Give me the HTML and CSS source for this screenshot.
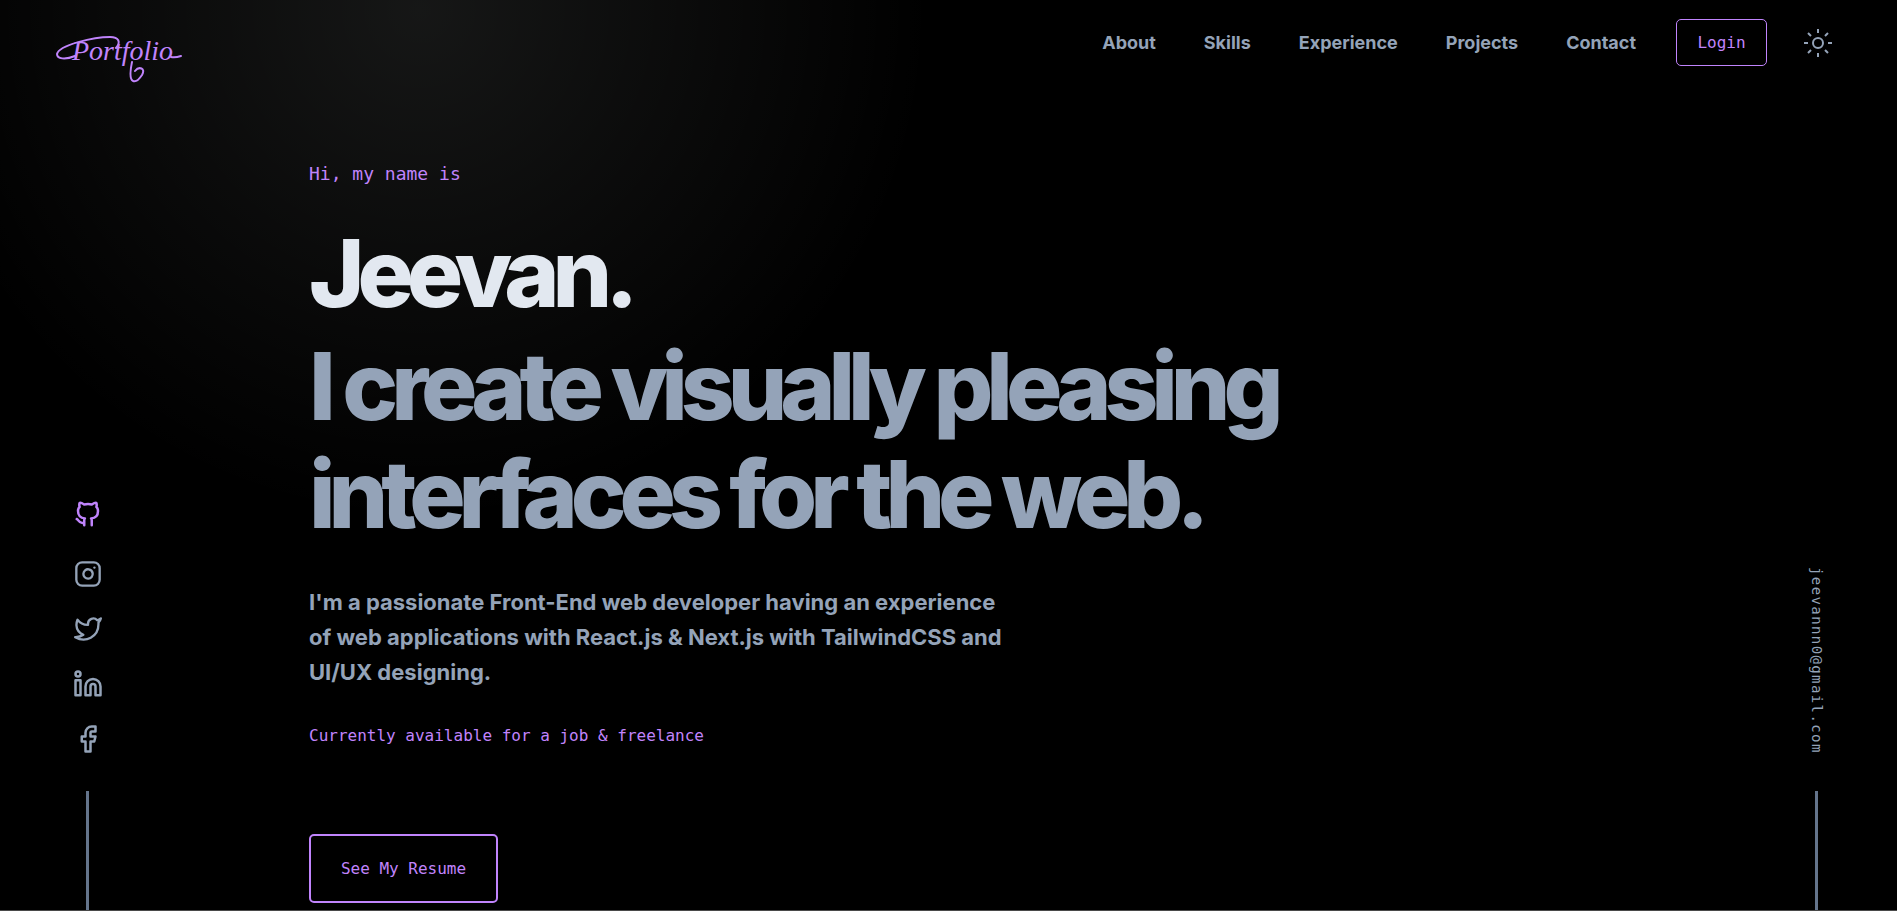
FILE: index.html
```html
<!DOCTYPE html>
<html lang="en">
<head>
  <meta charset="UTF-8">
  <meta name="viewport" content="width=device-width, initial-scale=1.0">
  <title>Jeevan | Portfolio</title>
  <link rel="stylesheet" href="styles.css">
</head>
<body>
  <div class="page">
    <!-- Navbar -->
    <header class="navbar">
      <a href="#" class="logo">
        <span>Portfolio</span>
        <svg class="flourish" viewBox="0 0 126 48" aria-hidden="true">
          <path d="M19 20C9 24 1 23 1 18C3 9 38 1 54 1C63 1 65 6 60 12"/>
          <path d="M76 26C71 50 80 48 86 39C90 32 83 30 79 35"/>
          <path d="M115 21C119 22 122 21 125 20"/>
        </svg>
      </a>
      <div class="nav-right">
        <nav class="nav-links">
          <a href="#about">About</a>
          <a href="#skills">Skills</a>
          <a href="#experience">Experience</a>
          <a href="#projects">Projects</a>
          <a href="#contact">Contact</a>
        </nav>
        <button type="button" class="login-btn">Login</button>
        <button type="button" class="theme-btn" aria-label="Toggle theme">
          <svg viewBox="0 0 30 30">
            <circle cx="15" cy="15" r="5"/>
            <path d="M15 1v4M15 25v4M1 15h4M25 15h4M5 5l3 3M22 22l3 3M5 25l3-3M22 8l3-3"/>
          </svg>
        </button>
      </div>
    </header>

    <div class="content">
      <!-- Social links -->
      <aside class="side">
        <ul class="social">
          <li>
            <a href="#" class="active" aria-label="GitHub">
              <svg viewBox="0 0 24 24"><path d="M9 19c-4.3 1.4-4.3-2.5-6-3m12 5v-3.5c0-1 .1-1.4-.5-2c2.8-.3 5.5-1.4 5.5-6a4.6 4.6 0 0 0-1.3-3.2a4.2 4.2 0 0 0-.1-3.2s-1.1-.3-3.5 1.3a12.3 12.3 0 0 0-6.2 0c-2.4-1.6-3.5-1.3-3.5-1.3a4.2 4.2 0 0 0-.1 3.2a4.6 4.6 0 0 0-1.3 3.2c0 4.6 2.7 5.7 5.5 6c-.6.6-.6 1.2-.5 2v3.5"/></svg>
            </a>
          </li>
          <li>
            <a href="#" aria-label="Instagram">
              <svg class="small" viewBox="0 0 24 24"><rect x="2" y="2" width="20" height="20" rx="5"/><path d="M16 11.37A4 4 0 1 1 12.63 8 4 4 0 0 1 16 11.37z"/><path d="M17.5 6.5h.01"/></svg>
            </a>
          </li>
          <li>
            <a href="#" aria-label="Twitter">
              <svg class="small" viewBox="0 0 24 24"><path d="M23 3a10.9 10.9 0 0 1-3.14 1.53 4.48 4.48 0 0 0-7.86 3v1A10.66 10.66 0 0 1 3 4s-4 9 5 13a11.64 11.64 0 0 1-7 2c9 5 20 0 20-11.5a4.5 4.5 0 0 0-.08-.83A7.72 7.72 0 0 0 23 3z"/></svg>
            </a>
          </li>
          <li>
            <a href="#" aria-label="LinkedIn">
              <svg viewBox="0 0 24 24"><path d="M16 8a6 6 0 0 1 6 6v7h-4v-7a2 2 0 0 0-4 0v7h-4v-7a6 6 0 0 1 6-6z"/><rect x="2" y="9" width="4" height="12"/><circle cx="4" cy="4" r="2"/></svg>
            </a>
          </li>
          <li>
            <a href="#" aria-label="Facebook">
              <svg viewBox="0 0 24 24"><path d="M18 2h-3a5 5 0 0 0-5 5v3H7v4h3v8h4v-8h3l1-4h-4V7a1 1 0 0 1 1-1h3z"/></svg>
            </a>
          </li>
        </ul>
        <div class="line"></div>
      </aside>

      <!-- Hero -->
      <main class="hero">
        <p class="intro">Hi, my name is</p>
        <h1>Jeevan.</h1>
        <h2>I create visually pleasing interfaces for the web.</h2>
        <p class="about">I'm a passionate Front-End web developer having an experience of web applications with React.js &amp; Next.js with TailwindCSS and UI/UX designing.</p>
        <p class="status">Currently available for a job &amp; freelance</p>
        <button type="button" class="resume-btn">See My Resume</button>
      </main>

      <!-- Email -->
      <aside class="side">
        <a href="mailto:jeevannn0@gmail.com" class="email">jeevannn0@gmail.com</a>
        <div class="line"></div>
      </aside>
    </div>
  </div>
</body>
</html>
```
FILE: styles.css
```css
* { margin: 0; padding: 0; box-sizing: border-box; }

:root {
  --purple: #c084fc;
  --slate: #94a3b8;
  --slate-dark: #64748b;
  --light: #e2e8f0;
  --mono: "DejaVu Sans Mono", monospace;
}

body {
  background: #000;
  color: var(--slate);
  font-family: Inter, sans-serif;
}

a { color: inherit; text-decoration: none; }
button { background: none; font-family: inherit; cursor: pointer; }

.page {
  min-height: 100vh;
  display: flex;
  flex-direction: column;
  border-bottom: 1px solid #4a4a4a;
  background: radial-gradient(640px at 420px 10px, rgba(245, 255, 250, 0.09), transparent 80%);
}

/* Navbar */
.navbar {
  display: flex;
  justify-content: space-between;
  align-items: flex-start;
  padding: 19px 64px 0 56px;
}

.logo {
  position: relative;
  margin-top: 17px;
  padding-left: 16px;
  color: var(--purple);
  font: italic 28px/30px "Liberation Serif", serif;
}

/* pen strokes over the wordmark */
.flourish {
  position: absolute;
  top: 0;
  left: 0;
  width: 126px;
  height: 48px;
  fill: none;
  stroke: var(--purple);
  stroke-width: 2;
  stroke-linecap: round;
}

.nav-right {
  display: flex;
  align-items: center;
}

.nav-links {
  display: flex;
  gap: 48px;
  margin-right: 40px;
  font-size: 18px;
  font-weight: 700;
}

.login-btn {
  width: 91px;
  height: 47px;
  margin-right: 36px;
  border: 1px solid var(--purple);
  border-radius: 5px;
  color: var(--purple);
  font-family: var(--mono);
  font-size: 16px;
}

.theme-btn {
  width: 30px;
  height: 30px;
  border: none;
}
.theme-btn svg {
  display: block;
  fill: none;
  stroke: var(--slate);
  stroke-width: 2;
}

/* Three columns: social, hero, email */
.content {
  flex: 1;
  display: grid;
  grid-template-columns: 175px 1fr 161px;
}

.side {
  display: flex;
  flex-direction: column;
  align-items: center;
  justify-content: flex-end;
}

.line {
  width: 3px;
  height: 119px;
  margin-top: 37px;
  background: var(--slate-dark);
}

.social {
  list-style: none;
  display: flex;
  flex-direction: column;
  gap: 25px;
}
.social a {
  display: flex;
  align-items: center;
  justify-content: center;
  width: 30px;
  height: 30px;
}
.social svg {
  width: 30px;
  height: 30px;
  fill: none;
  stroke: currentColor;
  stroke-width: 2;
  stroke-linecap: round;
  stroke-linejoin: round;
}
.social .small { width: 28px; height: 28px; }
.social .active {
  color: var(--purple);
  transform: translateY(-5px);
}

.email {
  writing-mode: vertical-rl;
  font-family: var(--mono);
  font-size: 14px;
  letter-spacing: 0.1em;
}

/* Hero */
.hero {
  padding: 96px 0 6px 134px;
}

.intro {
  color: var(--purple);
  font-family: var(--mono);
  font-size: 18px;
  line-height: 24px;
}

.hero h1,
.hero h2 {
  font-size: 94px;
  font-weight: 800;
  line-height: 108px;
  letter-spacing: -0.075em;
}
.hero h1 {
  margin-top: 33px;
  color: var(--light);
}
.hero h2 {
  max-width: 1100px;
  margin-top: 5px;
}

.about {
  max-width: 706px;
  margin-top: 37px;
  font-size: 22px;
  font-weight: 700;
  line-height: 35px;
}

.status {
  margin-top: 34px;
  color: var(--purple);
  font-family: var(--mono);
  font-size: 16px;
  line-height: 24px;
}

.resume-btn {
  width: 189px;
  height: 69px;
  margin-top: 86px;
  border: 2px solid var(--purple);
  border-radius: 5px;
  color: var(--purple);
  font-family: var(--mono);
  font-size: 16px;
}
```
